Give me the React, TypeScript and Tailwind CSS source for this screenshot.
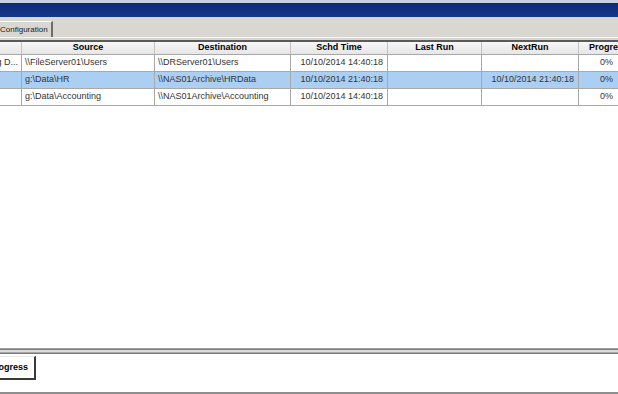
import React from "react";

type Row = {
  name: string;
  source: string;
  dest: string;
  schd: string;
  last: string;
  next: string;
  progress: string;
  selected?: boolean;
};

const ROWS: Row[] = [
  { name: "g D...", source: "\\\\FileServer01\\Users", dest: "\\\\DRServer01\\Users", schd: "10/10/2014 14:40:18", last: "", next: "", progress: "0%" },
  { name: "", source: "g:\\Data\\HR", dest: "\\\\NAS01Archive\\HRData", schd: "10/10/2014 21:40:18", last: "", next: "10/10/2014 21:40:18", progress: "0%", selected: true },
  { name: "", source: "g:\\Data\\Accounting", dest: "\\\\NAS01Archive\\Accounting", schd: "10/10/2014 14:40:18", last: "", next: "", progress: "0%" },
];

const COLS = [
  { label: "", w: "w-[22px]" },
  { label: "Source", w: "w-[133px]" },
  { label: "Destination", w: "w-[136px]" },
  { label: "Schd Time", w: "w-[97px]" },
  { label: "Last Run", w: "w-[94px]" },
  { label: "NextRun", w: "w-[97px]" },
  { label: "Progress", w: "w-[60px]" },
];

export default function App() {
  return (
    <div
      className="w-[618px] h-[394px] overflow-hidden bg-white flex flex-col text-[9px] text-black"
      style={{ fontFamily: '"Liberation Sans", Arial, sans-serif' }}
    >
      {/* title bar */}
      <div className="h-[3px] bg-[#c9d2e2] shrink-0" />
      <div className="h-[14px] bg-gradient-to-b from-[#0c2a78] to-[#17378a] shrink-0" />

      {/* tab strip */}
      <div className="h-[21px] bg-[#d9d7d1] shrink-0 flex items-end border-b border-[#f4f4f4]">
        <div className="h-[16px] pr-[3px] flex items-center border-r-2 border-[#6d6d6d] border-t border-t-white">
          <span className="text-[8px] text-[#202020]">Configuration</span>
        </div>
      </div>
      <div className="h-[2px] bg-[#d9d7d1] shrink-0" />

      {/* table */}
      <div className="border-t-2 border-[#5a5a5a] shrink-0">
        <div className="flex h-[13px] bg-gradient-to-b from-[#f7f7f7] to-[#e6e6e6] border-b border-[#a8a8a8]">
          {COLS.map((c, i) => (
            <div
              key={i}
              className={`${c.w} shrink-0 border-r border-[#c2c2c2] flex items-center justify-center font-bold whitespace-nowrap overflow-hidden`}
            >
              {c.label}
            </div>
          ))}
        </div>
        {ROWS.map((r, i) => (
          <div
            key={i}
            className={`flex h-[17px] border-b border-[#a8a8a8] text-[#333] ${r.selected ? "bg-[#abcff3]" : "bg-white"}`}
          >
            <div className="w-[22px] shrink-0 border-r border-[#a8a8a8] flex items-center justify-end pr-[3px] whitespace-nowrap overflow-hidden">
              {r.name}
            </div>
            <div className="w-[133px] shrink-0 border-r border-[#a8a8a8] flex items-center pl-[3px] whitespace-nowrap">
              {r.source}
            </div>
            <div className="w-[136px] shrink-0 border-r border-[#a8a8a8] flex items-center pl-[3px] whitespace-nowrap">
              {r.dest}
            </div>
            <div className="w-[97px] shrink-0 border-r border-[#a8a8a8] flex items-center justify-end pr-[4px] whitespace-nowrap">
              {r.schd}
            </div>
            <div className="w-[94px] shrink-0 border-r border-[#a8a8a8] flex items-center justify-end pr-[4px] whitespace-nowrap">
              {r.last}
            </div>
            <div className="w-[97px] shrink-0 border-r border-[#a8a8a8] flex items-center justify-end pr-[4px] whitespace-nowrap">
              {r.next}
            </div>
            <div className="w-[60px] shrink-0 flex items-center pl-[21px] whitespace-nowrap">
              {r.progress}
            </div>
          </div>
        ))}
      </div>

      {/* empty list area */}
      <div className="flex-1 bg-white" />

      {/* splitter */}
      <div className="shrink-0 flex flex-col">
        <div className="h-px bg-[#a0a0a0]" />
        <div className="h-px bg-[#7c7c7c]" />
        <div className="h-[2px] bg-[#dcdcdc]" />
        <div className="h-px bg-[#a8a8a8]" />
        <div className="h-px bg-[#7a7a7a]" />
      </div>

      {/* bottom panel */}
      <div className="h-[38px] shrink-0 bg-white flex items-start pt-[2px]">
        <div className="ml-[-40px] w-[76px] h-[24px] flex items-center justify-end pr-[6px] bg-white border-t border-l border-[#e8e8e8] border-r-2 border-b-2 border-r-[#3a3a3a] border-b-[#3a3a3a] font-bold text-[9px]">
          Progress
        </div>
      </div>
      <div className="h-[2px] bg-[#8e8e8e] shrink-0" />
    </div>
  );
}
